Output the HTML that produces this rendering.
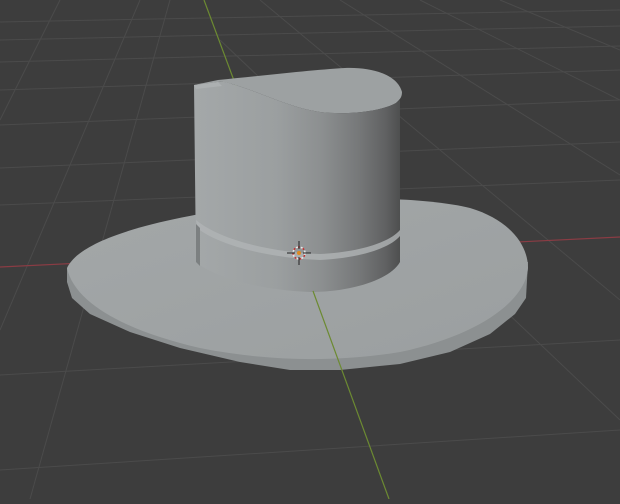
<!DOCTYPE html>
<html><head><style>html,body{margin:0;padding:0;background:#3d3d3d;overflow:hidden}</style></head>
<body>
<svg width="620" height="499" viewBox="0 0 620 499" xmlns="http://www.w3.org/2000/svg">
<defs>
<linearGradient id="cyl" x1="0" x2="1" y1="0" y2="0">
<stop offset="0" stop-color="#a4a8a9"/>
<stop offset="0.4" stop-color="#9b9fa0"/>
<stop offset="0.62" stop-color="#8c8f90"/>
<stop offset="0.8" stop-color="#767879"/>
<stop offset="0.93" stop-color="#606162"/>
<stop offset="1" stop-color="#4e4f4f"/>
</linearGradient>
<linearGradient id="brim" x1="0" x2="1" y1="0" y2="1">
<stop offset="0" stop-color="#a3a7a8"/>
<stop offset="1" stop-color="#9b9fa0"/>
</linearGradient>
</defs>
<rect width="620" height="499" fill="#3d3d3d"/>
<g stroke="#4b4b4b" stroke-width="1" fill="none">
<line x1="0" y1="22" x2="620" y2="10"/>
<line x1="0" y1="40" x2="620" y2="26"/>
<line x1="0" y1="62" x2="620" y2="46"/>
<line x1="0" y1="90" x2="620" y2="70"/>
<line x1="0" y1="125" x2="620" y2="100"/>
<line x1="0" y1="168" x2="620" y2="142"/>
<line x1="0" y1="205" x2="620" y2="180"/>
<line x1="0" y1="375" x2="620" y2="340"/>
<line x1="0" y1="470" x2="620" y2="430"/>
<line x1="0" y1="330" x2="140" y2="0"/>
<line x1="30" y1="499" x2="170" y2="0"/>
<line x1="60" y1="0" x2="0" y2="120"/>
<line x1="260" y1="0" x2="620" y2="300"/>
<line x1="340" y1="0" x2="620" y2="175"/>
<line x1="420" y1="0" x2="620" y2="100"/>
<line x1="500" y1="0" x2="620" y2="50"/>
<line x1="220" y1="40" x2="620" y2="420"/>
</g>
<line x1="0" y1="267" x2="620" y2="237" stroke="#8a3c44" stroke-width="1.2"/>
<line x1="204" y1="0" x2="312" y2="290" stroke="#6c8a32" stroke-width="1.2"/>
<!-- brim thickness -->
<path d="M67,268 L67,282 L72,298 L90,314 L130,332 L180,348 L240,362 L290,370 L340,370 L400,364 L450,352 L490,334 L515,314 L526,298 L528,262 L400,260 Z" fill="#8c9091"/>
<!-- brim top -->
<path d="M67,268 C80,240 150,220 250,206 C330,196 420,196 470,208 C510,220 528,245 528,268 C526,300 480,335 400,352 C340,362 270,362 200,348 C130,332 75,305 67,268 Z" fill="url(#brim)"/>
<!-- top -->
<path d="M194,85 L218,80 C260,76 310,70 345,68 C375,67 398,76 402,92 C402,98 399,100 396,103 C380,112 345,115 320,112 C290,108 260,92 232,84 Q222,81 218,82 Z" fill="#9da1a2"/>
<!-- cylinder body -->
<path d="M194,85 L218,82 Q224,81 232,84 C260,92 290,108 320,112 C345,115 380,112 396,103 L400,100 L400,262 C390,280 350,292 310,292 C260,290 215,278 196,262 Z" fill="url(#cyl)"/>
<path d="M194,85 L218,82 L222,86 L196,89 Z" fill="#acb0b1"/>
<!-- band -->
<path d="M196,220 C220,240 270,252 320,254 C360,252 390,242 400,230 L400,236 C390,248 360,258 320,260 C270,258 220,246 197,228 Z" fill="#b0b4b5" opacity="0.8"/>
<path d="M196,224 L196,262 L200,266 L200,228 Z" fill="#7c8081"/>
<!-- 3D cursor -->
<g transform="translate(299,253)">
<circle r="6" fill="none" stroke="#e8e8e8" stroke-width="1.5" stroke-dasharray="3 2"/>
<circle r="6" fill="none" stroke="#c03030" stroke-width="1.5" stroke-dasharray="2 3" stroke-dashoffset="3"/>
<line x1="-12" y1="0" x2="-4" y2="0" stroke="#222" stroke-width="1"/>
<line x1="4" y1="0" x2="12" y2="0" stroke="#222" stroke-width="1"/>
<line x1="0" y1="-12" x2="0" y2="-4" stroke="#222" stroke-width="1"/>
<line x1="0" y1="4" x2="0" y2="12" stroke="#222" stroke-width="1"/>
<circle r="2" fill="#e08a20"/>
</g>
<line x1="313" y1="291" x2="389" y2="499" stroke="#6c8a32" stroke-width="1.2"/>
</svg>
</body></html>
